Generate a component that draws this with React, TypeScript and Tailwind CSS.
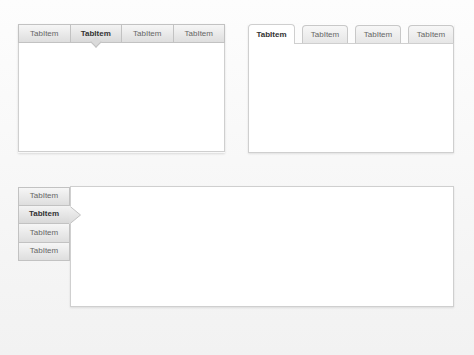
const LABEL = "TabItem";

function TopTabsPanel() {
  return (
    <div className="w-[207px] shadow-[0_1px_2px_rgba(0,0,0,0.12)]">
      <div className="flex h-[19px]">
        {[0, 1, 2, 3].map((i) => {
          const active = i === 1;
          return (
            <div
              key={i}
              className={
                "relative flex flex-1 items-center justify-center border-y border-[#c2c2c2] text-[8px] " +
                (i === 0 ? "border-l " : "") +
                "border-r " +
                (active
                  ? "bg-gradient-to-b from-[#f3f3f3] to-[#d9d9d9] font-bold text-[#333]"
                  : "bg-gradient-to-b from-[#f6f6f6] to-[#dedede] text-[#666]")
              }
            >
              {LABEL}
              {active && (
                <span className="absolute left-1/2 top-[13px] z-10 h-[8px] w-[8px] -translate-x-1/2 rotate-45 border-b border-r border-[#c2c2c2] bg-[#dadada]" />
              )}
            </div>
          );
        })}
      </div>
      <div className="h-[109px] border-x border-b border-[#cfcfcf] bg-white" />
    </div>
  );
}

function RoundTabsPanel() {
  return (
    <div className="w-[206px] shadow-[0_1px_2px_rgba(0,0,0,0.1)]">
      <div className="flex h-[19px] items-end gap-[7px]">
        <div className="relative z-10 -mb-px flex h-[20px] w-[47px] items-center justify-center rounded-t-[4px] border-x border-t border-[#cfcfcf] bg-white text-[8px] font-bold text-[#333]">
          {LABEL}
        </div>
        {[0, 1, 2].map((i) => (
          <div
            key={i}
            className="flex h-[18px] w-[46px] items-center justify-center rounded-t-[4px] border-x border-t border-[#c8c8c8] bg-gradient-to-b from-[#f7f7f7] to-[#e6e6e6] text-[8px] text-[#666]"
          >
            {LABEL}
          </div>
        ))}
      </div>
      <div className="h-[110px] border border-[#cfcfcf] bg-white" />
    </div>
  );
}

function SideTabsPanel() {
  return (
    <div className="flex">
      <div className="flex w-[52px] flex-col pt-px">
        {[0, 1, 2, 3].map((i) => {
          const active = i === 1;
          return (
            <div
              key={i}
              className={
                "relative flex h-[18.5px] items-center justify-center border-x border-b border-[#c2c2c2] text-[8px] " +
                (i === 0 ? "border-t " : "") +
                (active
                  ? "bg-gradient-to-b from-[#f3f3f3] to-[#d9d9d9] font-bold text-[#333]"
                  : "bg-gradient-to-b from-[#f6f6f6] to-[#dedede] text-[#666]")
              }
            >
              {LABEL}
              {active && (
                <svg
                  className="absolute left-[50px] top-[-1px] z-10"
                  width="13"
                  height="20"
                  viewBox="0 0 13 20"
                >
                  <defs>
                    <linearGradient id="arr" x1="0" y1="0" x2="0" y2="1">
                      <stop offset="0" stopColor="#f3f3f3" />
                      <stop offset="1" stopColor="#d9d9d9" />
                    </linearGradient>
                  </defs>
                  <polygon points="0,0.5 11.5,10 0,19.5" fill="url(#arr)" stroke="#c2c2c2" strokeWidth="1" />
                  <rect x="0" y="1" width="1.5" height="18" fill="url(#arr)" />
                </svg>
              )}
            </div>
          );
        })}
      </div>
      <div className="h-[121px] w-[384px] border border-[#cfcfcf] bg-white shadow-[0_1px_2px_rgba(0,0,0,0.1)]" />
    </div>
  );
}

export default function App() {
  return (
    <div
      className="flex h-[355px] w-[474px] flex-col bg-gradient-to-b from-[#fdfdfd] to-[#f2f2f2] pl-[18px] pt-[24px]"
      style={{ fontFamily: '"Liberation Sans", Arial, sans-serif' }}
    >
      <div className="flex gap-[23px]">
        <TopTabsPanel />
        <RoundTabsPanel />
      </div>
      <div className="mt-[33px]">
        <SideTabsPanel />
      </div>
    </div>
  );
}
